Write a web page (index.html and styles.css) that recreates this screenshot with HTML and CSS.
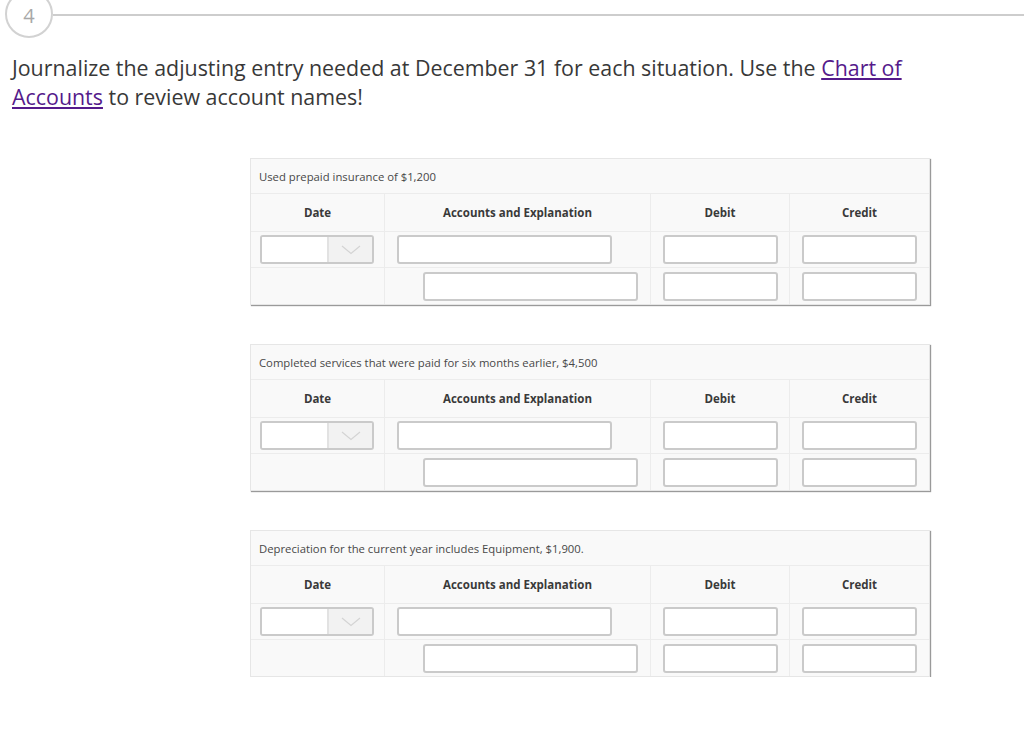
FILE: index.html
```html
<!DOCTYPE html>
<html lang="en">

<head>
  <meta charset="UTF-8">
  <meta name="viewport" content="width=device-width, initial-scale=1.0">
  <title>Question 4</title>
  <link rel="stylesheet" href="styles.css">
</head>

<body>
  <div class="qhead">
    <span class="qnum">4</span>
    <span class="qline"></span>
  </div>

  <p class="prompt">Journalize the adjusting entry needed at December 31 for each situation. Use the <a href="javascript:;">Chart of Accounts</a> to review account names!</p>

  <div class="journal">
    <div class="caption">Used prepaid insurance of $1,200</div>
    <div class="cell th">Date</div>
    <div class="cell th">Accounts and Explanation</div>
    <div class="cell th">Debit</div>
    <div class="cell th">Credit</div>

    <div class="cell"><div class="select"><span class="val"></span><span class="arrow"><svg width="20" height="10" viewBox="0 0 20 10"><path d="M1 1 L10 8.5 L19 1" fill="none" stroke="#d4d4d4" stroke-width="1.2"/></svg></span></div></div>
    <div class="cell"><input class="inp acct" type="text"></div>
    <div class="cell"><input class="inp amt" type="text"></div>
    <div class="cell"><input class="inp amt" type="text"></div>

    <div class="cell"></div>
    <div class="cell"><input class="inp acct indent" type="text"></div>
    <div class="cell"><input class="inp amt" type="text"></div>
    <div class="cell"><input class="inp amt" type="text"></div>
  </div>

  <div class="journal">
    <div class="caption">Completed services that were paid for six months earlier, $4,500</div>
    <div class="cell th">Date</div>
    <div class="cell th">Accounts and Explanation</div>
    <div class="cell th">Debit</div>
    <div class="cell th">Credit</div>

    <div class="cell"><div class="select"><span class="val"></span><span class="arrow"><svg width="20" height="10" viewBox="0 0 20 10"><path d="M1 1 L10 8.5 L19 1" fill="none" stroke="#d4d4d4" stroke-width="1.2"/></svg></span></div></div>
    <div class="cell"><input class="inp acct" type="text"></div>
    <div class="cell"><input class="inp amt" type="text"></div>
    <div class="cell"><input class="inp amt" type="text"></div>

    <div class="cell"></div>
    <div class="cell"><input class="inp acct indent" type="text"></div>
    <div class="cell"><input class="inp amt" type="text"></div>
    <div class="cell"><input class="inp amt" type="text"></div>
  </div>

  <div class="journal">
    <div class="caption">Depreciation for the current year includes Equipment, $1,900.</div>
    <div class="cell th">Date</div>
    <div class="cell th">Accounts and Explanation</div>
    <div class="cell th">Debit</div>
    <div class="cell th">Credit</div>

    <div class="cell"><div class="select"><span class="val"></span><span class="arrow"><svg width="20" height="10" viewBox="0 0 20 10"><path d="M1 1 L10 8.5 L19 1" fill="none" stroke="#d4d4d4" stroke-width="1.2"/></svg></span></div></div>
    <div class="cell"><input class="inp acct" type="text"></div>
    <div class="cell"><input class="inp amt" type="text"></div>
    <div class="cell"><input class="inp amt" type="text"></div>

    <div class="cell"></div>
    <div class="cell"><input class="inp acct indent" type="text"></div>
    <div class="cell"><input class="inp amt" type="text"></div>
    <div class="cell"><input class="inp amt" type="text"></div>
  </div>
</body>

</html>
```

FILE: styles.css
```css
body {
  margin: 0;
  font-family: "Open Sans", "Liberation Sans", sans-serif;
  color: #333;
  background-color: #fff;
}

/* question number + rule */
.qhead {
  display: flex;
  align-items: center;
  margin-top: -10px;
  padding-left: 5px;
}

.qnum {
  box-sizing: border-box;
  width: 48px;
  height: 48px;
  border: 2px solid #d2d2d2;
  border-radius: 50%;
  display: flex;
  align-items: center;
  justify-content: center;
  font-size: 20px;
  color: #a8a8a8;
  padding-top: 3px;
}

.qline {
  flex: 1;
  height: 0;
  border-top: 2px solid #cdcdcd;
  margin-top: 2px;
}

.prompt {
  margin: 15px 0 0 12px;
  width: 920px;
  font-size: 21.4px;
  line-height: 29px;
  color: #383838;
}

.prompt a {
  color: #551a8b;
  text-decoration: underline;
}

/* journal table */
.journal {
  display: grid;
  grid-template-columns: 133px 266px 139px 140px;
  grid-template-rows: 35px 38px 36px 36px;
  width: 678px;
  margin: 47px 0 0 250px;
  border: 1px solid #e6e6e6;
  box-shadow: 1px 1px 1px #9a9a9a;
  background-color: #f9f9f9;
}

.journal + .journal {
  margin-top: 39px;
}

.caption {
  grid-column: 1 / -1;
  display: flex;
  align-items: center;
  padding-left: 8px;
  font-size: 11.3px;
  color: #484848;
  border-bottom: 1px solid #ececec;
}

.cell {
  display: flex;
  align-items: center;
  border-left: 1px solid #ececec;
  border-bottom: 1px solid #ececec;
}

.cell:nth-child(4n+2) {
  border-left: none;
}

.cell:nth-last-child(-n+4) {
  border-bottom: none;
}

.th {
  justify-content: center;
  font-size: 11.5px;
  font-weight: bold;
  color: #3a3a3a;
}

.inp {
  box-sizing: border-box;
  height: 29px;
  margin: 0;
  border: 2px solid #cacaca;
  border-radius: 3px;
  background-color: #fff;
  padding: 0 6px;
  font-family: inherit;
}

.acct {
  width: 215px;
  margin-left: 12px;
}

.acct.indent {
  margin-left: 38px;
}

.amt {
  width: 115px;
  margin-left: 12px;
}

.select {
  box-sizing: border-box;
  display: flex;
  width: 114px;
  height: 29px;
  margin-left: 9px;
  border: 2px solid #cacaca;
  border-radius: 3px;
  overflow: hidden;
}

.select .val {
  flex: 1;
  background-color: #fff;
}

.select .arrow {
  width: 43px;
  display: flex;
  align-items: center;
  justify-content: center;
  border-left: 2px solid #e2e2e2;
  background-color: #f2f2f2;
}
```
